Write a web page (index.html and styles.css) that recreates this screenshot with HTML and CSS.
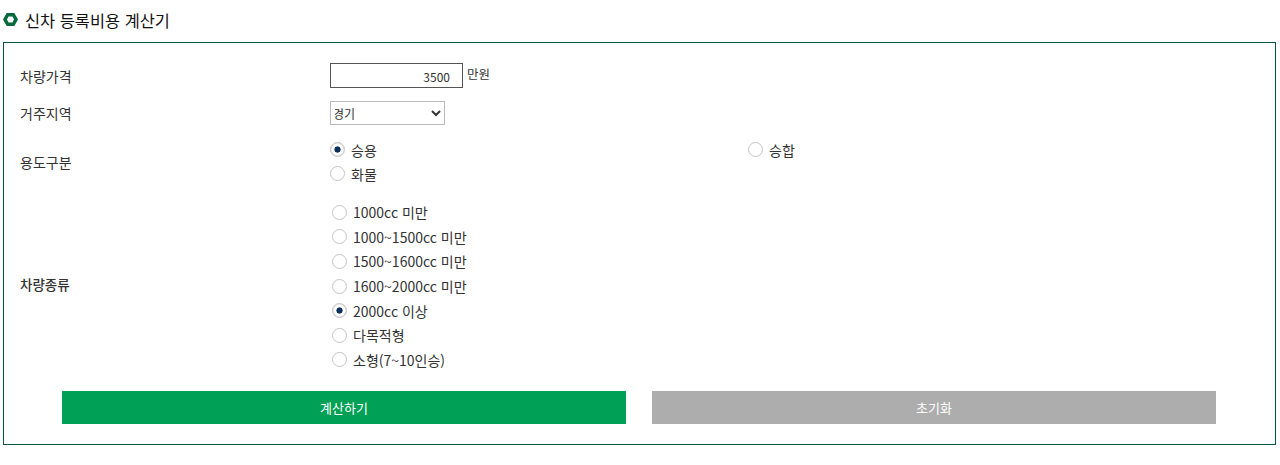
FILE: index.html
```html
<!DOCTYPE html>
<html lang="ko">
<head>
<meta charset="UTF-8">
<title>신차 등록비용 계산기</title>
<link rel="stylesheet" href="styles.css">
</head>
<body>
<h2 class="title">
  <svg class="title-icon" width="15" height="13" viewBox="0 0 15 13"><path d="M3.7 0H11.3L15 6.5L11.3 13H3.7L0 6.5ZM5.6 3.4L3.9 6.5L5.6 9.6H9.4L11.1 6.5L9.4 3.4Z" fill="#00693e" fill-rule="evenodd"/></svg>
  신차 등록비용 계산기
</h2>
<form class="calc">
  <div class="row row-price">
    <div class="label">차량가격</div>
    <div class="field">
      <input class="price" type="text" value="3500">
      <span class="unit">만원</span>
    </div>
  </div>
  <div class="row row-region">
    <div class="label">거주지역</div>
    <div class="field">
      <select class="region">
        <option>경기</option>
      </select>
    </div>
  </div>
  <div class="row row-use">
    <div class="label">용도구분</div>
    <div class="field use-grid">
      <label class="radio"><input type="radio" name="use" checked>승용</label>
      <label class="radio"><input type="radio" name="use">승합</label>
      <label class="radio"><input type="radio" name="use">화물</label>
    </div>
  </div>
  <div class="row row-type">
    <div class="label label-strong">차량종류</div>
    <div class="field type-list">
      <label class="radio"><input type="radio" name="type">1000cc 미만</label>
      <label class="radio"><input type="radio" name="type">1000~1500cc 미만</label>
      <label class="radio"><input type="radio" name="type">1500~1600cc 미만</label>
      <label class="radio"><input type="radio" name="type">1600~2000cc 미만</label>
      <label class="radio"><input type="radio" name="type" checked>2000cc 이상</label>
      <label class="radio"><input type="radio" name="type">다목적형</label>
      <label class="radio"><input type="radio" name="type">소형(7~10인승)</label>
    </div>
  </div>
  <div class="buttons">
    <button type="button" class="btn btn-calc">계산하기</button>
    <button type="button" class="btn btn-reset">초기화</button>
  </div>
</form>
</body>
</html>
```

FILE: styles.css
```css
html, body { margin: 0; padding: 0; background: #fff; }
body { font-family: "Noto Sans CJK KR", "Noto Sans", sans-serif; font-size: 14px; color: #333; height: 465px; overflow: hidden; }

.title { display: flex; align-items: center; gap: 7px; margin: 0; padding: 0 0 3px 3px; height: 42px; font-size: 16.4px; font-weight: 400; color: #111; box-sizing: border-box; }
.title-icon { flex: none; }

.calc { box-sizing: border-box; width: 1273px; height: 403px; margin-left: 3px; padding: 20px 16px 0; border: 1px solid #00563a; }

.row { display: flex; align-items: center; }
.label { width: 310px; flex: none; }
.label-strong { margin-bottom: 5px; color: #333; font-size: 13.5px; font-weight: 500; }
.field { flex: 1; }

.row-price { height: 25px; }
.row-region { height: 24px; margin-top: 13px; }
.row-use { margin-top: 12.5px; }
.row-type { margin-top: 14.5px; }

.price { box-sizing: border-box; width: 133px; height: 25px; padding: 1px 12px 0 4px; border: 1px solid #555; border-radius: 0; font: inherit; font-size: 12px; color: #333; text-align: right; outline: none; vertical-align: middle; }
.unit { font-size: 12.5px; }

.region { box-sizing: border-box; width: 115px; height: 24px; padding: 0; border: 1px solid #bbb; border-radius: 0; background: #fff; font: inherit; font-size: 12px; color: #333; text-indent: -2px; }

.radio { display: flex; align-items: center; height: 24px; }
.radio input { appearance: none; box-sizing: border-box; width: 15px; height: 15px; margin: 0 6px 0 0; border: 1px solid #c4c4c4; border-radius: 50%; background: #fff; flex: none; }
.radio input:checked { background: radial-gradient(circle, #0d2f5e 0 2.8px, #fff 3.4px); box-shadow: inset 0 0 1px #999; }

.use-grid { display: grid; grid-template-columns: 418px 1fr; }

.type-list { padding-left: 2px; }
.type-list .radio { height: 24.6px; }

.buttons { display: flex; gap: 26px; margin: 18.5px 0 0 42px; }
.btn { width: 564px; height: 33px; padding: 0; border: 0; font: inherit; font-size: 13px; color: #fff; }
.btn-calc { background: #00a056; }
.btn-reset { background: #adadad; }
```
